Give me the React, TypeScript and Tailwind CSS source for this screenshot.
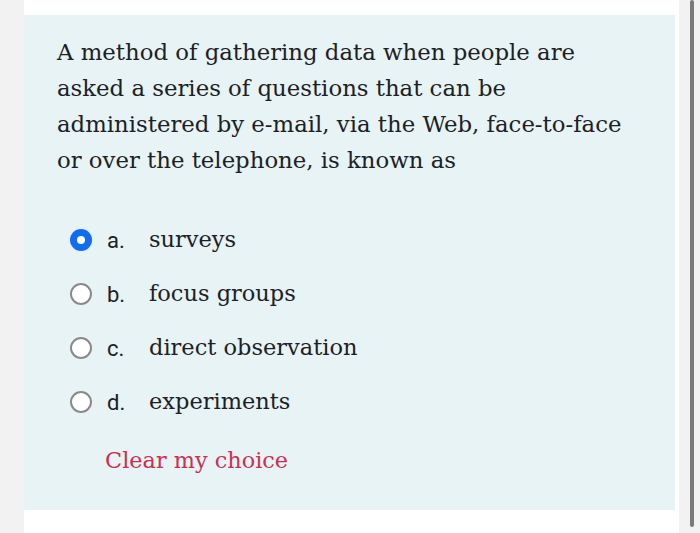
import React from "react";

const options = [
  { key: "a.", text: "surveys", checked: true },
  { key: "b.", text: "focus groups", checked: false },
  { key: "c.", text: "direct observation", checked: false },
  { key: "d.", text: "experiments", checked: false },
];

function Radio({ checked }: { checked: boolean }) {
  if (checked) {
    return (
      <span className="flex h-[22px] w-[22px] shrink-0 items-center justify-center rounded-full bg-[#0f6cf5]">
        <span className="h-[8px] w-[8px] rounded-full bg-white" />
      </span>
    );
  }
  return <span className="h-[22px] w-[22px] shrink-0 rounded-full border-2 border-[#8a8a8a] bg-white" />;
}

export default function App() {
  return (
    <div className="flex h-[533px] w-[700px] overflow-hidden bg-[#f2f2f2]">
      <div className="ml-[24px] flex w-[655px] flex-col bg-white pt-[15px] pr-[4px]">
        <div className="h-[495px] bg-[#e7f3f5] pt-[19px] pl-[33px] pr-[20px]">
          <p
            className="whitespace-nowrap text-[22.8px] leading-[36px] text-[#1d2125]"
            style={{ fontFamily: '"DejaVu Serif", serif' }}
          >
            A method of gathering data when people are
            <br />
            asked a series of questions that can be
            <br />
            administered by e-mail, via the Web, face-to-face
            <br />
            or over the telephone, is known as
          </p>
          <div className="mt-[46px] flex flex-col gap-[22px] pl-[13px]">
            {options.map((o) => (
              <div key={o.key} className="flex h-[32px] items-center">
                <Radio checked={o.checked} />
                <span
                  className="ml-[15px] w-[42px] text-[22px] text-[#1d2125]"
                  style={{ fontFamily: 'Roboto, sans-serif' }}
                >
                  {o.key}
                </span>
                <span
                  className="text-[22.5px] text-[#1d2125]"
                  style={{ fontFamily: '"DejaVu Serif", serif' }}
                >
                  {o.text}
                </span>
              </div>
            ))}
          </div>
          <div
            className="mt-[26px] pl-[48px] text-[22.4px] text-[#ca3151]"
            style={{ fontFamily: '"DejaVu Serif", serif' }}
          >
            Clear my choice
          </div>
        </div>
      </div>
      <div className="ml-[11px] mt-0 h-[527px] w-[4px] rounded-full bg-[#7a7a7a]" />
    </div>
  );
}
